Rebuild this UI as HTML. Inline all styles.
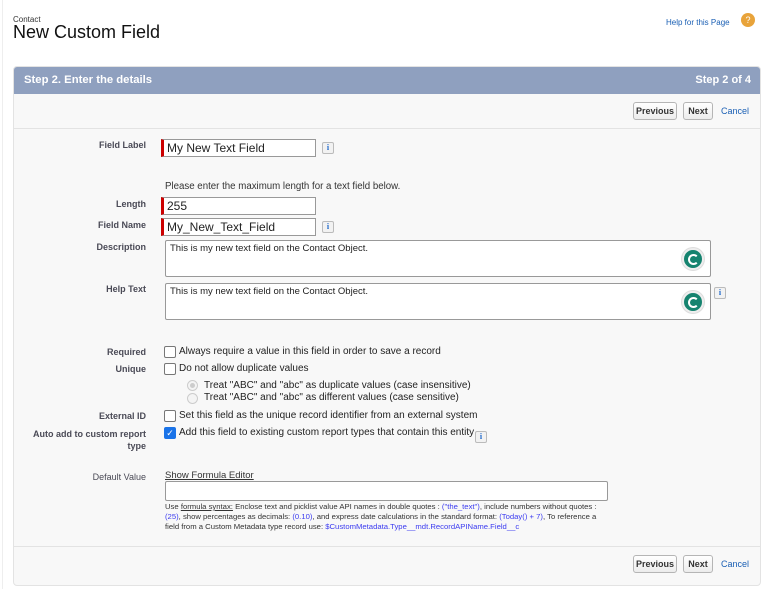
<!DOCTYPE html>
<html><head><meta charset="utf-8"><style>
*{box-sizing:border-box;margin:0;padding:0}
body{width:768px;height:589px;background:#fff;font-family:"Liberation Sans",Arial,sans-serif;position:relative;overflow:hidden;color:#333}
.a{position:absolute}
.lbl{position:absolute;right:622px;font-size:9px;font-weight:bold;color:#4a4a56;text-align:right;white-space:nowrap}
.lbl2{position:absolute;right:622px;font-size:9px;color:#4a4a56;text-align:right}
.inp{position:absolute;left:161px;height:18px;border:1px solid #999;border-left:3px solid #c00;background:#fff;font-size:12px;padding:1px 3px;color:#222}
.info{position:absolute;width:12px;height:12px;border:1px solid #bbb;border-radius:2px;background:#f2f2f2;color:#1b66c9;font-size:8px;font-weight:bold;text-align:center;line-height:10px;font-family:"Liberation Serif",serif}
.ta{position:absolute;left:165px;width:546px;height:37px;border:1px solid #999;border-radius:2px;background:#fff;font-size:9.5px;padding:2px 4px;color:#222}
.g{position:absolute;right:6px;top:7px;width:22px;height:22px;border-radius:50%;background:#15836f;border:2px solid #eee;box-shadow:0 0 0 1px #ddd}
.g:after{content:"";position:absolute;left:4px;top:4px;width:7px;height:7px;border:2px solid #fff;border-radius:50%;border-right-color:transparent}
.btn{position:absolute;height:18px;border:1px solid #b5b5b5;border-radius:3px;background:linear-gradient(#fff,#ececec);font-size:9px;font-weight:bold;color:#333;text-align:center;line-height:16px}
.cancel{position:absolute;font-size:9px;color:#1a5fb4}
.cb{position:absolute;left:164px;width:12px;height:12px;border:1px solid #777;border-radius:2px;background:#fff}
.t{position:absolute;font-size:10px;color:#222;white-space:nowrap}
.rd{position:absolute;left:187px;width:11px;height:11px;border-radius:50%;border:1px solid #ccc;background:#f4f4f4}
.bl{color:#3c3cf0}
</style></head><body>
<div class="a" style="left:2px;top:0;width:1px;height:589px;background:#eee"></div>
<div class="a" style="left:13px;top:15px;font-size:8px;color:#333">Contact</div>
<div class="a" style="left:13px;top:22px;font-size:18px;color:#111">New Custom Field</div>
<div class="a" style="left:666px;top:18px;font-size:8px;color:#1a5fb4">Help for this Page</div>
<div class="a" style="left:741px;top:13px;width:14px;height:14px;border-radius:50%;background:#e8a33a;color:#fff;font-size:9px;text-align:center;line-height:14px">?</div>

<div class="a" style="left:13px;top:66px;width:748px;height:520px;border:1px solid #e3e3e3;border-radius:4px;background:#f8f8f8;overflow:hidden">
 <div class="a" style="left:0;top:0;width:748px;height:27px;background:#8fa0bf"></div>
 <div class="a" style="left:10px;top:7px;font-size:11.3px;font-weight:bold;color:#fff">Step 2. Enter the details</div>
 <div class="a" style="right:9px;top:7px;font-size:11px;font-weight:bold;color:#fff">Step 2 of 4</div>
 <div class="a" style="left:0;top:61px;width:748px;height:1px;background:#e3e3e3"></div>
 <div class="a" style="left:0;top:479px;width:748px;height:1px;background:#e3e3e3"></div>
</div>
<div class="btn" style="left:633px;top:102px;width:44px">Previous</div>
<div class="btn" style="left:683px;top:102px;width:30px">Next</div>
<div class="cancel" style="left:721px;top:106px">Cancel</div>
<div class="btn" style="left:633px;top:555px;width:44px">Previous</div>
<div class="btn" style="left:683px;top:555px;width:30px">Next</div>
<div class="cancel" style="left:721px;top:559px">Cancel</div>

<div class="lbl" style="top:140px">Field Label</div>
<div class="inp" style="top:139px;width:155px">My New Text Field</div>
<div class="info" style="left:322px;top:142px">i</div>
<div class="t" style="left:165px;top:181px;color:#333;font-size:9.7px">Please enter the maximum length for a text field below.</div>
<div class="lbl" style="top:199px">Length</div>
<div class="inp" style="top:197px;width:155px">255</div>
<div class="lbl" style="top:220px">Field Name</div>
<div class="inp" style="top:218px;width:155px">My_New_Text_Field</div>
<div class="info" style="left:322px;top:221px">i</div>
<div class="lbl" style="top:242px">Description</div>
<div class="ta" style="top:240px">This is my new text field on the Contact Object.<div class="g"></div></div>
<div class="lbl" style="top:284px">Help Text</div>
<div class="ta" style="top:283px">This is my new text field on the Contact Object.<div class="g"></div></div>
<div class="info" style="left:714px;top:287px">i</div>

<div class="lbl" style="top:347px">Required</div>
<div class="cb" style="top:346px"></div>
<div class="t" style="left:179px;top:346px">Always require a value in this field in order to save a record</div>
<div class="lbl" style="top:364px">Unique</div>
<div class="cb" style="top:363px"></div>
<div class="t" style="left:179px;top:363px">Do not allow duplicate values</div>
<div class="rd" style="top:380px"><div class="a" style="left:2px;top:2px;width:5px;height:5px;border-radius:50%;background:#ccc"></div></div>
<div class="t" style="left:204px;top:380px">Treat "ABC" and "abc" as duplicate values (case insensitive)</div>
<div class="rd" style="top:393px"></div>
<div class="t" style="left:204px;top:392px">Treat "ABC" and "abc" as different values (case sensitive)</div>
<div class="lbl" style="top:411px">External ID</div>
<div class="cb" style="top:410px"></div>
<div class="t" style="left:179px;top:410px">Set this field as the unique record identifier from an external system</div>
<div class="lbl" style="top:428px;line-height:12px">Auto add to custom report<br>type</div>
<div class="cb" style="top:427px;background:#1a73e8;border-color:#1a73e8;color:#fff;font-size:9px;line-height:10px;text-align:center">✓</div>
<div class="t" style="left:179px;top:427px">Add this field to existing custom report types that contain this entity</div>
<div class="info" style="left:475px;top:431px">i</div>

<div class="lbl2" style="top:472px">Default Value</div>
<div class="t" style="left:165px;top:470px;font-size:9.5px;text-decoration:underline;color:#333">Show Formula Editor</div>
<div class="a" style="left:165px;top:481px;width:443px;height:20px;border:1px solid #999;border-radius:2px;background:#fff"></div>
<div class="a" style="left:165px;top:502px;width:442px;font-size:7.7px;line-height:10px;color:#333">Use <u>formula syntax:</u> Enclose text and picklist value API names in double quotes : <span class="bl">("the_text")</span>, include numbers without quotes : <span class="bl">(25)</span>, show percentages as decimals: <span class="bl">(0.10)</span>, and express date calculations in the standard format: <span class="bl">(Today() + 7)</span>, To reference a field from a Custom Metadata type record use: <span class="bl">$CustomMetadata.Type__mdt.RecordAPIName.Field__c</span></div>
</body></html>
